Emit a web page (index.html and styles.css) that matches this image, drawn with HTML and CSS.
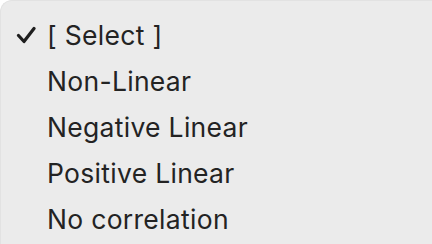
FILE: index.html
```html
<!DOCTYPE html>
<html lang="en">
<head>
  <meta charset="UTF-8" />
  <meta name="viewport" content="width=device-width, initial-scale=1.0" />
  <title>Correlation menu</title>
  <link rel="stylesheet" href="styles.css">
</head>
<body>
  <div class="menu">
    <div class="item checked">
      <span class="mark">
        <svg width="20" height="20" viewBox="0 0 20 20"><path d="M2.5 10.5 L8 16.5 L18 3.5" fill="none" stroke="#1e1e1e" stroke-width="3.2" stroke-linecap="round" stroke-linejoin="round"/></svg>
      </span>
      <span class="label">[ Select ]</span>
    </div>
    <div class="item"><span class="mark"></span><span class="label">Non-Linear</span></div>
    <div class="item"><span class="mark"></span><span class="label">Negative Linear</span></div>
    <div class="item"><span class="mark"></span><span class="label">Positive Linear</span></div>
    <div class="item"><span class="mark"></span><span class="label">No correlation</span></div>
  </div>
</body>
</html>
```

FILE: styles.css
```css
html, body {
  margin: 0;
  padding: 0;
  height: 100%;
  background: #ffffff;
  overflow: hidden;
}

.menu {
  min-height: 100%;
  box-sizing: border-box;
  background: #ebebeb;
  border-top-left-radius: 12px;
  border-top: 1px solid #e2e2e2;
  border-left: 1px solid #e2e2e2;
  padding-top: 11px;
  font-family: Inter, 'Liberation Sans', sans-serif;
  font-size: 26.5px;
  letter-spacing: 0.3px;
  color: #232323;
}

.item {
  display: flex;
  align-items: center;
  height: 46px;
  padding-left: 15px;
}

.mark {
  width: 20px;
  height: 20px;
  margin-right: 11px;
  display: flex;
}

.label {
  line-height: 46px;
}
```
